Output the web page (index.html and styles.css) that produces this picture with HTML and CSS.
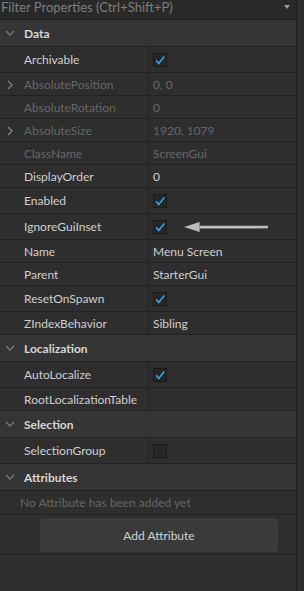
FILE: index.html
```html
<!DOCTYPE html>
<html lang="en">
<head>
<meta charset="UTF-8">
<title>Properties</title>
<link rel="stylesheet" href="styles.css">
</head>
<body>
<div class="panel">
  <div class="main">
    <div class="filter"><span>Filter Properties (Ctrl+Shift+P)</span><i class="drop"></i></div>

    <div class="head"><svg class="chev" viewBox="0 0 10 6"><path d="M1 1l4 4 4-4"/></svg>Data</div>
    <div class="row tall"><div class="k">Archivable</div><div class="v"><span class="cb"><svg viewBox="0 0 14 14"><path d="M2.5 7.2l3 3.8L12 3"/></svg></span></div></div>
    <div class="row off"><div class="k"><svg class="exp" viewBox="0 0 6 10"><path d="M1 1l4 4-4 4"/></svg>AbsolutePosition</div><div class="v">0, 0</div></div>
    <div class="row off"><div class="k">AbsoluteRotation</div><div class="v">0</div></div>
    <div class="row off"><div class="k"><svg class="exp" viewBox="0 0 6 10"><path d="M1 1l4 4-4 4"/></svg>AbsoluteSize</div><div class="v">1920, 1079</div></div>
    <div class="row off"><div class="k">ClassName</div><div class="v">ScreenGui</div></div>
    <div class="row"><div class="k">DisplayOrder</div><div class="v">0</div></div>
    <div class="row tall"><div class="k">Enabled</div><div class="v"><span class="cb"><svg viewBox="0 0 14 14"><path d="M2.5 7.2l3 3.8L12 3"/></svg></span></div></div>
    <div class="row tall"><div class="k">IgnoreGuiInset</div><div class="v"><span class="cb"><svg viewBox="0 0 14 14"><path d="M2.5 7.2l3 3.8L12 3"/></svg></span></div>
      <svg class="arrow" viewBox="0 0 90 12"><path d="M16 4.6L86 4.8v2.6L16 7.6z"/><path d="M0 6l16-5v10z"/></svg>
    </div>
    <div class="row"><div class="k">Name</div><div class="v">Menu Screen</div></div>
    <div class="row"><div class="k">Parent</div><div class="v">StarterGui</div></div>
    <div class="row tall"><div class="k">ResetOnSpawn</div><div class="v"><span class="cb"><svg viewBox="0 0 14 14"><path d="M2.5 7.2l3 3.8L12 3"/></svg></span></div></div>
    <div class="row"><div class="k">ZIndexBehavior</div><div class="v">Sibling</div></div>

    <div class="head"><svg class="chev" viewBox="0 0 10 6"><path d="M1 1l4 4 4-4"/></svg>Localization</div>
    <div class="row tall"><div class="k">AutoLocalize</div><div class="v"><span class="cb"><svg viewBox="0 0 14 14"><path d="M2.5 7.2l3 3.8L12 3"/></svg></span></div></div>
    <div class="row"><div class="k">RootLocalizationTable</div><div class="v"></div></div>

    <div class="head"><svg class="chev" viewBox="0 0 10 6"><path d="M1 1l4 4 4-4"/></svg>Selection</div>
    <div class="row tall"><div class="k">SelectionGroup</div><div class="v"><span class="cb"></span></div></div>

    <div class="head"><svg class="chev" viewBox="0 0 10 6"><path d="M1 1l4 4 4-4"/></svg>Attributes</div>
    <div class="note">No Attribute has been added yet</div>
    <div class="btnrow"><button class="add">Add Attribute</button></div>
  </div>
  <div class="scroll"></div>
</div>
</body>
</html>
```

FILE: styles.css
```css
*{margin:0;padding:0;box-sizing:border-box}
body{background:#2e2e2e;font-family:'Lato','Noto Sans',sans-serif;font-size:12px;color:#cfcfcf;width:304px;height:591px;overflow:hidden}
.panel{display:flex;height:591px}
.main{width:297px;border-right:1px solid #1f1f1f;flex:none}
.scroll{flex:1;background:#2e2e2e}
.filter{height:20px;background:#292929;border-bottom:1px solid #1e1e1e;display:flex;align-items:flex-start;justify-content:space-between;color:#7e7e7e;padding:1px 4px 0 1px;font-size:13px;line-height:13px;overflow:hidden}
.filter span{white-space:nowrap}
.drop{width:0;height:0;border-left:3.5px solid transparent;border-right:3.5px solid transparent;border-top:4px solid #9a9a9a;margin-top:4px;margin-right:2px}
.head{height:27px;background:#353535;border-bottom:1px solid #222;display:flex;align-items:center;padding-left:24px;font-weight:700;color:#d6d6d6;position:relative}
.chev{position:absolute;left:5px;top:10px;width:10px;height:6px;fill:none;stroke:#7a7a7a;stroke-width:1.3}
.row{height:23px;border-bottom:1px solid #222;display:flex;position:relative}
.row.tall{height:26px}
.k{width:149px;border-right:1px solid #222;padding-left:24px;display:flex;align-items:center;position:relative;white-space:nowrap}
.v{flex:1;padding-left:4px;display:flex;align-items:center}
.off{color:#676767}
.exp{position:absolute;left:7px;top:7px;width:6px;height:10px;fill:none;stroke:#808080;stroke-width:1.3}
.cb{width:14px;height:14px;background:#262626;border:1px solid #1a1a1a;display:flex;align-items:center;justify-content:center}
.cb svg{width:14px;height:14px;fill:none;stroke:#35a6f0;stroke-width:1.8}
.arrow{position:absolute;left:184px;top:7px;width:88px;height:12px;fill:#bdbdbd}
.note{height:24px;border-bottom:1px solid #222;display:flex;align-items:center;padding-left:20px;color:#666}
.btnrow{height:40px;border-bottom:1px solid #222;padding:3px 0 0 40px}
.add{width:238px;height:34px;background:#3a3a3a;border:none;border-radius:3px;color:#d0d0d0;font-family:'Lato','Noto Sans',sans-serif;font-size:12px}
```
